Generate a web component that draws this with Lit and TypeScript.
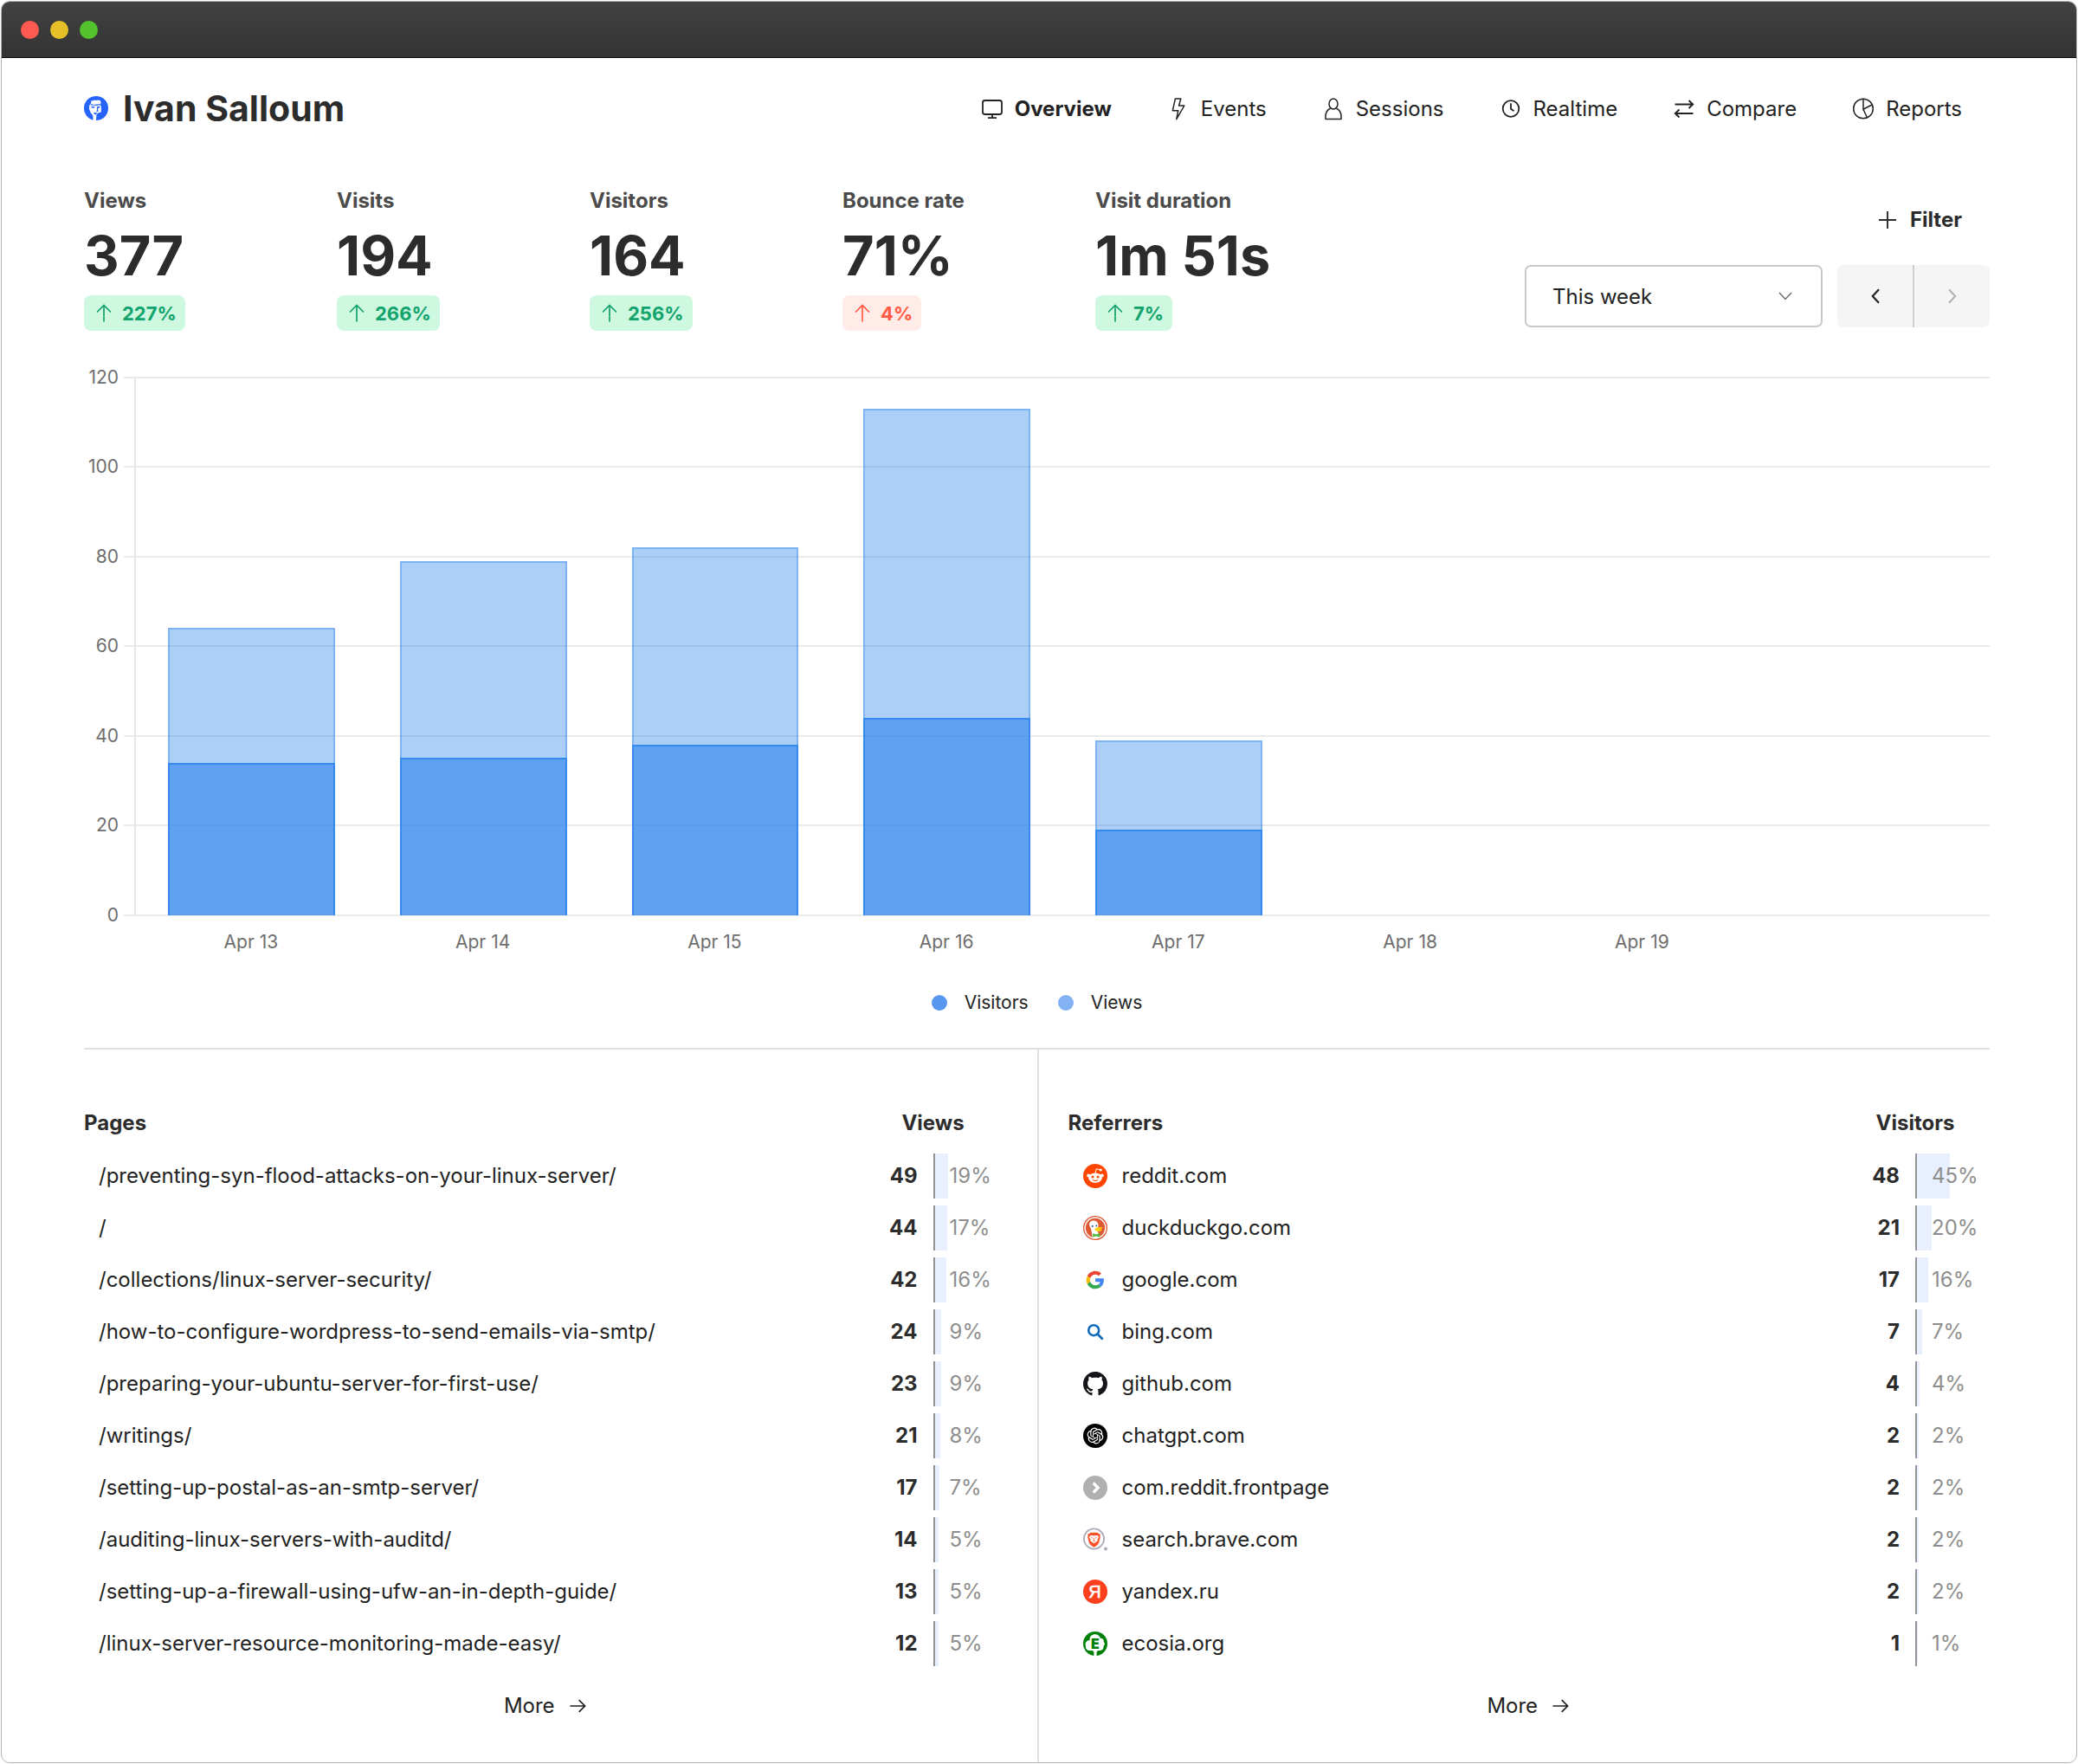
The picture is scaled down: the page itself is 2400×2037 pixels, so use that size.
import { LitElement, html, css, svg } from "lit";
import { customElement, property } from "lit/decorators.js";

type Glyph = ReturnType<typeof svg>;

const icons: Record<string, Glyph> = {
  overview: svg`<rect x="3" y="4" width="22" height="16" rx="2.5" fill="none" stroke="currentColor" stroke-width="1.8"/><path d="M14 20v4M9 24.2h10" fill="none" stroke="currentColor" stroke-width="1.8"/>`,
  bolt: svg`<path d="M10.4 2h6.4l-2.2 8h6.2L11.8 25.6l1.9-9.8H7.3z" fill="none" stroke="currentColor" stroke-width="1.5" stroke-linejoin="round"/>`,
  user: svg`<ellipse cx="14" cy="8" rx="5" ry="6" fill="none" stroke="currentColor" stroke-width="1.5"/><path d="M10.6 13.2C7 14.8 5 18 5 22v3.6h18V22c0-4-2-7.2-5.6-8.8" fill="none" stroke="currentColor" stroke-width="1.5" stroke-linejoin="round"/>`,
  clock: svg`<circle cx="14" cy="13.5" r="9.3" fill="none" stroke="currentColor" stroke-width="1.8"/><path d="M14 8v5.7l3 2" fill="none" stroke="currentColor" stroke-width="1.8" stroke-linecap="round"/>`,
  compare: svg`<path d="M3.5 8.5h20.500M19.500 4l4.700 4.500-4.700 4.500M24.500 19H4M8.500 14.500L3.800 19l4.700 4.500" fill="none" stroke="currentColor" stroke-width="1.9"/>`,
  pie: svg`<circle cx="14" cy="13.5" r="11.3" fill="none" stroke="currentColor" stroke-width="1.5"/><path d="M14 2.200v12l10-5.200M14 14.200l4.500 9.500" fill="none" stroke="currentColor" stroke-width="1.5"/>`,
  plus: svg`<path d="M14 4v20M4 14h20" fill="none" stroke="currentColor" stroke-width="1.9"/>`,
  up: svg`<path d="M14 4.500v19M6 12.500l8-8 8 8" fill="none" stroke="currentColor" stroke-width="1.7"/>`,
  down: svg`<path d="M7 10l7 7.500 7-7.500" fill="none" stroke="currentColor" stroke-width="1.500"/>`,
  left: svg`<path d="M18 6.300L10.800 14l7.200 7.700" fill="none" stroke="currentColor" stroke-width="2.200"/>`,
  right: svg`<path d="M10 6.300l7.200 7.700-7.200 7.700" fill="none" stroke="currentColor" stroke-width="2"/>`,
  arrow: svg`<path d="M4 14h20M16 6l8 8-8 8" fill="none" stroke="currentColor" stroke-width="2"/>`,
  brand: svg`<circle cx="14" cy="14" r="14" fill="#2563fb"/><path d="M8.200 7.200L8.600 5l1.800.5L11.200 4.600l2.300.4 3.600-.6 2.200 1.100L19.400 9l-1.300.3 1.700 2.200.1 5.500-.6 2.600-2.300.6-2.400 3-.8 4.800h-3.200l-.3-5.500L7.600 19 6 14.800l.2-4.300 1.500-1.300z" fill="#fff"/><path d="M8.300 8.900c3 1.300 6.300 1.200 9.700.2l.5 1.700c-1.300-.5-2.700-.4-4.200.2-1.900-.5-4-.7-6.200-.1z" fill="#2563fb"/><path d="M8.200 12.200c1.500-.8 3-.7 4.500.2l-.6 1.200-2.800.1zM14.800 12.400c1.200-.8 2.600-.9 4-.1l-.7 1.300-1.900.2.200 3.800-2.200 1.200c.8-2 .9-4.200.6-6.400zM11 18.800l4.200.6-.8 1 .6 1-3-.3z" fill="#2563fb"/><path d="M15.800 19.500l4.400-1-3.200 5.500-2.600.8.200-2.500z" fill="#2563fb"/>`,
  reddit: svg`<circle cx="14" cy="14" r="14" fill="#ff4500"/><ellipse cx="14" cy="16.2" rx="7.8" ry="5.8" fill="#fff"/><circle cx="6.2" cy="13.6" r="2" fill="#fff"/><circle cx="21.8" cy="13.6" r="2" fill="#fff"/><path d="M14 11l1.200-5.200 4.200.9" fill="none" stroke="#fff" stroke-width="1"/><circle cx="20.2" cy="7" r="1.6" fill="#fff"/><circle cx="11" cy="15" r="1.5" fill="#ff4500"/><circle cx="17" cy="15" r="1.5" fill="#ff4500"/><path d="M10.800 18.600q3.200 2.200 6.400 0" fill="none" stroke="#ff4500" stroke-width="1"/>`,
  duck: svg`<circle cx="14" cy="14" r="14" fill="#de5833"/><circle cx="14" cy="14" r="11.9" fill="none" stroke="#fff" stroke-width="1.5"/><path d="M7 9.500c.5-3 3-4.500 5.500-4C16 6 18 8.500 17.500 12l-1 3 .5 3 1.700 6.500c-2.700 1.200-5.400 1.200-8 .3C10.200 21 9.800 18 9 15c-.7-2-2-3-2-5.500z" fill="#fff"/><circle cx="10.800" cy="12" r="1.100" fill="#2d4f8e"/><circle cx="15.300" cy="11.500" r=".9" fill="#2d4f8e"/><path d="M14 14.600c2.500-1 5.200-1.200 8-.9-1.500 1.500-3.500 1.300-4.500 1.900 1.500.6 2.800.4 4 .7-1.700 1.700-5.500 1.700-7.500.3z" fill="#fdd20a" stroke="#fdd20a" stroke-width=".8"/><path d="M11.200 20.200l4 1.300 4-1.500v4.600l-4-1.200-4 1.200z" fill="#4cba3c"/>`,
  google: svg`<g transform="translate(3.700 3.700) scale(.43)"><path fill="#ea4335" d="M24 9.500c3.540 0 6.710 1.220 9.210 3.600l6.850-6.850C35.900 2.380 30.470 0 24 0 14.620 0 6.510 5.380 2.560 13.220l7.980 6.190C12.430 13.720 17.740 9.500 24 9.500z"/><path fill="#4285f4" d="M46.980 24.550c0-1.570-.15-3.090-.38-4.550H24v9.020h12.940c-.58 2.960-2.260 5.480-4.780 7.180l7.730 6c4.510-4.180 7.090-10.360 7.090-17.650z"/><path fill="#fbbc05" d="M10.530 28.590c-.48-1.450-.76-2.990-.76-4.590s.27-3.140.76-4.590l-7.980-6.190C.92 16.460 0 20.120 0 24c0 3.880.92 7.540 2.560 10.780z"/><path fill="#34a853" d="M24 48c6.480 0 11.930-2.130 15.890-5.810l-7.730-6c-2.150 1.450-4.920 2.300-8.160 2.300-6.260 0-11.570-4.220-13.470-9.910l-7.980 6.190C6.510 42.620 14.620 48 24 48z"/></g>`,
  bing: svg`<circle cx="12.200" cy="12.200" r="6" fill="none" stroke="#0f6cbd" stroke-width="2.600"/><path d="M16.600 16.600l5.200 5.200" fill="none" stroke="#0f6cbd" stroke-width="2.800" stroke-linecap="round"/>`,
  github: svg`<path transform="scale(1.75)" fill="#161418" d="M8 0C3.580 0 0 3.580 0 8c0 3.540 2.290 6.530 5.470 7.590.4.070.55-.17.55-.38 0-.19-.01-.82-.01-1.490-2.010.37-2.530-.49-2.690-.94-.09-.23-.48-.94-.82-1.130-.28-.15-.68-.52-.01-.53.63-.01 1.080.58 1.230.82.720 1.210 1.870.87 2.330.66.070-.52.28-.87.51-1.070-1.780-.2-3.640-.89-3.640-3.950 0-.87.31-1.590.82-2.150-.08-.2-.36-1.020.08-2.120 0 0 .67-.21 2.200.82.640-.18 1.320-.27 2-.27s1.360.09 2 .27c1.530-1.040 2.200-.82 2.200-.82.44 1.100.16 1.920.08 2.120.51.56.82 1.270.82 2.150 0 3.070-1.870 3.750-3.650 3.950.29.25.54.73.54 1.480 0 1.070-.01 1.930-.01 2.200 0 .21.15.46.55.38A8.010 8.010 0 0016 8c0-4.420-3.580-8-8-8z"/>`,
  chatgpt: svg`<circle cx="14" cy="14" r="14" fill="#000"/><g transform="translate(4.600 4.600) scale(.783)"><path fill="#fff" d="M22.2819 9.8211a5.9847 5.9847 0 0 0-.5157-4.9108 6.0462 6.0462 0 0 0-6.5098-2.9A6.0651 6.0651 0 0 0 4.9807 4.1818a5.9847 5.9847 0 0 0-3.9977 2.9 6.0462 6.0462 0 0 0 .7427 7.0966 5.98 5.98 0 0 0 .511 4.9107 6.051 6.051 0 0 0 6.5146 2.9001A5.9847 5.9847 0 0 0 13.2599 24a6.0557 6.0557 0 0 0 5.7718-4.2058 5.9894 5.9894 0 0 0 3.9977-2.9001 6.0557 6.0557 0 0 0-.7475-7.0729zm-9.022 12.6081a4.4755 4.4755 0 0 1-2.8764-1.0408l.1419-.0804 4.7783-2.7582a.7948.7948 0 0 0 .3927-.6813v-6.7369l2.02 1.1686a.071.071 0 0 1 .038.052v5.5826a4.504 4.504 0 0 1-4.4945 4.4944zm-9.6607-4.1254a4.4708 4.4708 0 0 1-.5346-3.0137l.142.0852 4.783 2.7582a.7712.7712 0 0 0 .7806 0l5.8428-3.3685v2.3324a.0804.0804 0 0 1-.0332.0615L9.74 19.9502a4.4992 4.4992 0 0 1-6.1408-1.6464zM2.3408 7.8956a4.485 4.485 0 0 1 2.3655-1.9728V11.6a.7664.7664 0 0 0 .3879.6765l5.8144 3.3543-2.0201 1.1685a.0757.0757 0 0 1-.071 0l-4.8303-2.7865A4.504 4.504 0 0 1 2.3408 7.872zm16.5963 3.8558L13.1038 8.364 15.1192 7.2a.0757.0757 0 0 1 .071 0l4.8303 2.7913a4.4944 4.4944 0 0 1-.6765 8.1042v-5.6772a.79.79 0 0 0-.407-.667zm2.0107-3.0231l-.142-.0852-4.7735-2.7818a.7759.7759 0 0 0-.7854 0L9.409 9.2297V6.8974a.0662.0662 0 0 1 .0284-.0615l4.8303-2.7866a4.4992 4.4992 0 0 1 6.6802 4.66zM8.3065 12.863l-2.02-1.1638a.0804.0804 0 0 1-.038-.0567V6.0742a4.4992 4.4992 0 0 1 7.3757-3.4537l-.142.0805L8.704 5.459a.7948.7948 0 0 0-.3927.6813zm1.0976-2.3654l2.602-1.4998 2.6069 1.4998v2.9994l-2.5974 1.4997-2.6067-1.4997Z"/></g>`,
  generic: svg`<circle cx="14" cy="14" r="14" fill="#b0b0b0"/><path d="M11.700 8.500l5.500 5.500-5.500 5.500" fill="none" stroke="#fff" stroke-width="3.200"/>`,
  brave: svg`<circle cx="12.500" cy="13" r="11.600" fill="#fff" stroke="#a9acb5" stroke-width="1.900"/><path d="M8.500 5.800h8l1.300 1.300 1.900.5-.3 2.200.4 1.100-1.500 6.300c-1 2.700-3.300 4.200-5.800 5.500-2.500-1.300-4.800-2.800-5.800-5.500L5.200 10.900l.4-1.100-.3-2.200 1.900-.5z" fill="#fb542b"/><path d="M8 9.300l2.500-.3 2 .5 2-.5 2.500.3 1 2-1.600 2.700.4 1.600-2.600 1.400-1.700 1.300-1.700-1.300-2.600-1.400.4-1.600L7 11.300z" fill="#fff"/><path d="M9.200 11.300l2.100 1M15.800 11.300l-2.100 1M12.500 12.500v2.500M11.200 15.300l1.300.7 1.300-.7" stroke="#fb542b" stroke-width=".8" fill="none"/><circle cx="26" cy="24.500" r="2" fill="#a9acb5"/>`,
  yandex: svg`<circle cx="14" cy="14" r="14" fill="#fc3f1d"/><text x="13.500" y="21.300" text-anchor="middle" font-family="Liberation Sans, sans-serif" font-size="20" font-weight="400" fill="#fff" stroke="#fff" stroke-width=".6">Я</text>`,
  ecosia: svg`<circle cx="14" cy="14" r="14" fill="#008009"/><path d="M7.600 10.200C7 6 10 3.200 13.500 3.200c3.500 0 5.700 2 6.200 4.600 2.800-.3 4.600 1.700 4 4 1.700 1.600 1.300 4-.2 5 .6 2.800-1.200 5.200-4 5.200h-1.300c-.8 0-2.200.6-2.600 1.800V28h-3.200v-4.200c-.4-1.200-1.600-1.800-2.600-1.800H7.600c-3.500 0-5.200-2.700-4.600-5.300C1.500 13.500 4 10 7.600 10.200z" fill="#fff"/><text x="14" y="20" text-anchor="middle" font-family="Inter, sans-serif" font-size="16" font-weight="900" fill="#008009">E</text>`,
};

@customElement("app-icon")
export class AppIcon extends LitElement {
  static styles = css`
    :host { display: inline-flex; flex: none; width: 28px; height: 28px; }
    .glyph { display: block; width: 100%; height: 100%; }
  `;
  @property() name = "";
  render() {
    return html`<svg class="glyph" viewBox="0 0 28 28" aria-hidden="true">${icons[this.name]}</svg>`;
  }
}

interface Row { label: string; count: number; share: number; icon?: string; }

@customElement("metrics-table")
export class MetricsTable extends LitElement {
  static styles = css`
    :host { display: block; }
    .table { width: 100%; border-collapse: collapse; table-layout: fixed; }
    .name-col, .name { text-align: left; }
    .head th { height: 46px; padding: 0 0 8px; font-weight: 700; }
    .name-col { width: auto; }
    .value-col { width: 172px; text-align: center; }
    .row td, .row th { height: 60px; padding: 0; font-weight: 400; }
    .name .link { display: inline-flex; align-items: center; gap: 17px; padding-left: 17px; color: #222; text-decoration: none; vertical-align: middle; }
    .values { display: flex; align-items: center; }
    .count { flex: 1; padding-right: 18px; text-align: right; font-weight: 700; }
    .share { display: grid; align-items: center; width: 84px; height: 52px; border-left: 2px solid #949494; color: #8e8e8e; }
    .fill { grid-area: 1 / 1; height: 100%; background: #e8f0ff; }
    .percent { grid-area: 1 / 1; padding-left: 17px; }
    .more { display: flex; justify-content: center; margin-top: 19px; }
    .button { display: flex; align-items: center; gap: 14px; padding: 8px 0; border: 0; background: none; color: #222; font: inherit; line-height: 30px; }
    .arrow { width: 24px; height: 24px; }
  `;
  @property() heading = "";
  @property() metric = "";
  @property({ attribute: false }) rows: Row[] = [];
  render() {
    return html`
      <table class="table">
        <thead>
          <tr class="head">
            <th class="name-col" scope="col">${this.heading}</th>
            <th class="value-col" scope="col">${this.metric}</th>
          </tr>
        </thead>
        <tbody>
          ${this.rows.map((r) => html`
            <tr class="row">
              <th class="name" scope="row">
                <a class="link" href="#">${r.icon ? html`<app-icon name=${r.icon}></app-icon>` : ""}<span>${r.label}</span></a>
              </th>
              <td>
                <div class="values">
                  <span class="count">${r.count}</span>
                  <div class="share">
                    <div class="fill" style="width:${r.share}%"></div>
                    <span class="percent">${r.share}%</span>
                  </div>
                </div>
              </td>
            </tr>`)}
        </tbody>
      </table>
      <div class="more"><button class="button" type="button">More<app-icon class="arrow" name="arrow"></app-icon></button></div>
    `;
  }
}

const MAX = 120;

@customElement("traffic-chart")
export class TrafficChart extends LitElement {
  static styles = css`
    :host { display: block; font-size: 21px; line-height: 26px; color: #6e6e6e; }
    .chart { display: grid; grid-template-columns: 46px 1fr; }
    .scale { display: flex; flex-direction: column; justify-content: space-between; margin: -12px 0; padding-right: 6px; text-align: right; }
    .plot { display: grid; height: 623px; }
    .lines { grid-area: 1 / 1; display: flex; flex-direction: column; justify-content: space-between; }
    .line { height: 2px; background: #eaeaea; }
    .bars { grid-area: 1 / 1; display: grid; grid-template-columns: repeat(8, 1fr); margin: 1px 0 1px 12px; border-left: 2px solid #e6e6e6; }
    .slot { display: flex; flex-direction: column; justify-content: flex-end; align-items: center; }
    .bar { box-sizing: border-box; width: 72%; border: 2px solid; border-bottom: 0; background-clip: padding-box; }
    .views { background-color: rgba(38, 128, 235, 0.38); border-color: rgba(38, 128, 235, 0.6); }
    .visitors { background-color: rgba(38, 128, 235, 0.74); border-color: rgba(38, 128, 235, 0.92); }
    .days { grid-column: 2; display: grid; grid-template-columns: repeat(8, 1fr); margin: 17px 0 0 13px; text-align: center; }
    .legend { display: flex; justify-content: center; gap: 34px; margin-top: 44px; color: #222; }
    .key { display: flex; align-items: center; gap: 20px; }
    .dot { width: 18px; height: 18px; border-radius: 50%; }
    .dot-visitors { background: #5797ef; }
    .dot-views { background: #82b1f4; }
  `;
  private days = [
    ["Apr 13", 34, 64], ["Apr 14", 35, 79], ["Apr 15", 38, 82], ["Apr 16", 44, 113],
    ["Apr 17", 19, 39], ["Apr 18", 0, 0], ["Apr 19", 0, 0],
  ] as [string, number, number][];
  render() {
    const ticks = [120, 100, 80, 60, 40, 20, 0];
    const pct = (n: number) => `height:${(n / MAX) * 100}%`;
    return html`
      <div class="chart">
        <div class="scale">${ticks.map((t) => html`<span>${t}</span>`)}</div>
        <div class="plot">
          <div class="lines">${ticks.map(() => html`<div class="line"></div>`)}</div>
          <div class="bars">
            ${this.days.map(([, visitors, views]) => html`<div class="slot">${views
              ? html`<div class="bar views" style=${pct(views - visitors)}></div><div class="bar visitors" style=${pct(visitors)}></div>`
              : ""}</div>`)}
          </div>
        </div>
        <div class="days">${this.days.map(([day]) => html`<span>${day}</span>`)}</div>
      </div>
      <div class="legend">
        <span class="key"><span class="dot dot-visitors"></span>Visitors</span>
        <span class="key"><span class="dot dot-views"></span>Views</span>
      </div>
    `;
  }
}

@customElement("app-root")
export class AppRoot extends LitElement {
  static styles = css`
    :host { display: block; box-sizing: border-box; min-height: 100vh; padding: 1px; background: #fff; color: #2c2c2c; font: 24px/30px Inter, "Liberation Sans", sans-serif; }
    .window { display: flex; flex-direction: column; box-sizing: border-box; min-height: calc(100vh - 2px); border: 1px solid #b4b4b4; border-radius: 10px; overflow: hidden; }
    .titlebar { display: flex; align-items: center; gap: 13px; height: 64px; padding-left: 22px; background: linear-gradient(#424242, #333); border-bottom: 1px solid #0c0a0d; }
    .light { width: 21px; height: 21px; border-radius: 50%; }
    .close { background: #ff5a52; }
    .minimise { background: #e6c029; }
    .zoom { background: #53c22c; }
    .page { display: flex; flex: 1; flex-direction: column; padding: 0 100px 0 95px; }
    .header { display: flex; align-items: center; justify-content: space-between; height: 116px; }
    .title { display: flex; align-items: center; gap: 17px; margin: 0; font-size: 41px; line-height: 50px; font-weight: 700; }
    .nav { display: flex; gap: 63px; padding: 2px 32px 0 0; }
    .tab { display: flex; align-items: center; gap: 12px; color: #222; text-decoration: none; }
    .active { font-weight: 700; }
    .summary { display: flex; justify-content: space-between; padding-top: 34px; }
    .stats { display: grid; grid-template-columns: repeat(5, 292px); }
    .label { color: #4b4b4b; font-weight: 700; }
    .figure { margin: 10px 0 8px; font-size: 63px; line-height: 76px; font-weight: 700; white-space: nowrap; }
    .change { display: inline-flex; align-items: center; gap: 7px; height: 41px; padding: 0 10px 0 9px; border-radius: 8px; font-weight: 700; font-size: 22px; }
    .good { background: #cef8e0; color: #12a46c; }
    .bad { background: #ffebe7; color: #ff5b45; }
    .controls { display: flex; flex-direction: column; align-items: flex-end; gap: 37px; padding-top: 22px; }
    .filter { display: flex; align-items: center; gap: 12px; padding: 0 32px 0 0; border: 0; background: none; color: inherit; font: inherit; font-weight: 700; }
    .range { display: flex; gap: 17px; }
    .picker { display: grid; align-items: center; width: 344px; height: 72px; }
    .select { grid-area: 1 / 1; box-sizing: border-box; width: 100%; height: 100%; padding: 2px 30px 0; border: 2px solid #c9c9c9; border-radius: 7px; background: #fff; color: #222; font: inherit; appearance: none; }
    .caret { grid-area: 1 / 1; justify-self: end; margin-right: 29px; color: #6e6e6e; pointer-events: none; }
    .steps { display: flex; border-radius: 7px; background: #f5f5f5; overflow: hidden; }
    .step { display: flex; align-items: center; justify-content: center; width: 87px; padding: 0; border: 0; background: none; color: #222; }
    .step + .step { width: 89px; border-left: 2px solid #cfcfcf; color: #b1b1b1; }
    .traffic { margin-top: 52px; }
    .panels { display: grid; flex: 1; grid-template-columns: 1fr 1fr; margin-top: 39px; border-top: 2px solid #e1e1e1; }
    .panel { padding: 62px 34px 30px 0; }
    .panel + .panel { padding: 62px 0 30px 34px; border-left: 2px solid #e1e1e1; }
  `;

  private stats = [
    ["Views", "377", "227%", "good"], ["Visits", "194", "266%", "good"], ["Visitors", "164", "256%", "good"],
    ["Bounce rate", "71%", "4%", "bad"], ["Visit duration", "1m 51s", "7%", "good"],
  ];
  private tabs = [
    ["Overview", "overview"], ["Events", "bolt"], ["Sessions", "user"],
    ["Realtime", "clock"], ["Compare", "compare"], ["Reports", "pie"],
  ];
  private pages: Row[] = [
    { label: "/preventing-syn-flood-attacks-on-your-linux-server/", count: 49, share: 19 },
    { label: "/", count: 44, share: 17 },
    { label: "/collections/linux-server-security/", count: 42, share: 16 },
    { label: "/how-to-configure-wordpress-to-send-emails-via-smtp/", count: 24, share: 9 },
    { label: "/preparing-your-ubuntu-server-for-first-use/", count: 23, share: 9 },
    { label: "/writings/", count: 21, share: 8 },
    { label: "/setting-up-postal-as-an-smtp-server/", count: 17, share: 7 },
    { label: "/auditing-linux-servers-with-auditd/", count: 14, share: 5 },
    { label: "/setting-up-a-firewall-using-ufw-an-in-depth-guide/", count: 13, share: 5 },
    { label: "/linux-server-resource-monitoring-made-easy/", count: 12, share: 5 },
  ];
  private referrers: Row[] = [
    { label: "reddit.com", count: 48, share: 45, icon: "reddit" },
    { label: "duckduckgo.com", count: 21, share: 20, icon: "duck" },
    { label: "google.com", count: 17, share: 16, icon: "google" },
    { label: "bing.com", count: 7, share: 7, icon: "bing" },
    { label: "github.com", count: 4, share: 4, icon: "github" },
    { label: "chatgpt.com", count: 2, share: 2, icon: "chatgpt" },
    { label: "com.reddit.frontpage", count: 2, share: 2, icon: "generic" },
    { label: "search.brave.com", count: 2, share: 2, icon: "brave" },
    { label: "yandex.ru", count: 2, share: 2, icon: "yandex" },
    { label: "ecosia.org", count: 1, share: 1, icon: "ecosia" },
  ];

  render() {
    return html`
      <div class="window">
        <div class="titlebar">
          <span class="light close"></span><span class="light minimise"></span><span class="light zoom"></span>
        </div>
        <main class="page">
          <header class="header">
            <h1 class="title"><app-icon name="brand"></app-icon>Ivan Salloum</h1>
            <nav class="nav">
              ${this.tabs.map(([name, icon], i) => html`
                <a class="tab ${i === 0 ? "active" : ""}" href="#"><app-icon name=${icon}></app-icon>${name}</a>`)}
            </nav>
          </header>
          <section class="summary">
            <div class="stats">
              ${this.stats.map(([label, figure, change, tone]) => html`
                <div class="stat">
                  <div class="label">${label}</div>
                  <div class="figure">${figure}</div>
                  <div class="change ${tone}"><app-icon name="up"></app-icon>${change}</div>
                </div>`)}
            </div>
            <div class="controls">
              <button class="filter" type="button"><app-icon name="plus"></app-icon>Filter</button>
              <div class="range">
                <div class="picker">
                  <select class="select" aria-label="Date range"><option>This week</option></select>
                  <app-icon class="caret" name="down"></app-icon>
                </div>
                <div class="steps">
                  <button class="step" type="button" aria-label="Previous"><app-icon name="left"></app-icon></button>
                  <button class="step" type="button" aria-label="Next" disabled><app-icon name="right"></app-icon></button>
                </div>
              </div>
            </div>
          </section>
          <traffic-chart class="traffic"></traffic-chart>
          <section class="panels">
            <div class="panel"><metrics-table heading="Pages" metric="Views" .rows=${this.pages}></metrics-table></div>
            <div class="panel"><metrics-table heading="Referrers" metric="Visitors" .rows=${this.referrers}></metrics-table></div>
          </section>
        </main>
      </div>
    `;
  }
}
